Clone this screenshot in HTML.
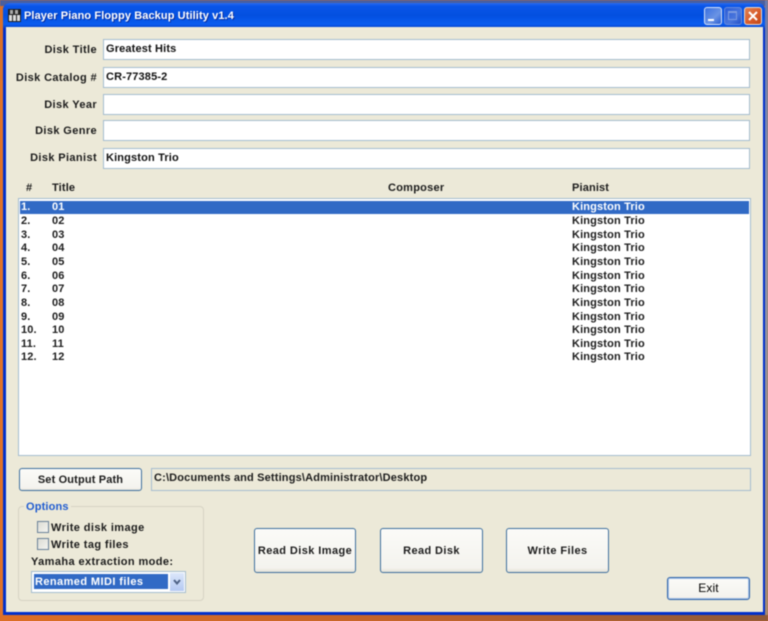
<!DOCTYPE html>
<html><head><meta charset="utf-8">
<style>
html,body{margin:0;padding:0;width:768px;height:621px;overflow:hidden;background:#d9702a}
body{position:relative;font-family:"Liberation Sans",sans-serif;font-size:11px;font-weight:bold;color:#111}
.a{position:absolute;white-space:nowrap}
#root{position:absolute;left:0;top:0;width:768px;height:621px;overflow:hidden;filter:blur(.4px)}
.lbl{position:absolute;right:671px;letter-spacing:.38px;line-height:14px;color:#1c1c1c}
.in{position:absolute;left:103px;height:19px;background:#fff;border:1px solid #a5bccf;line-height:18px;padding-left:2px;box-sizing:content-box;width:643px;letter-spacing:.15px}
.btn{position:absolute;box-sizing:border-box;border:1px solid #3e6f9e;border-radius:3px;background:linear-gradient(#fbfbf8,#f4f3ee 90%,#e6e3d8);text-align:center;letter-spacing:.15px;color:#1c1c1c}
.row{position:absolute;left:0;width:731px;height:14px;line-height:14px;letter-spacing:.15px;color:#1c1c1c}
.row span{position:absolute;top:0}
.n{left:2px}.t{left:33px}.p{left:553px}
.cb{position:absolute;width:10px;height:10px;border:1px solid #6a8198;background:linear-gradient(135deg,#dcdcd4,#f4f4f0)}
.o{letter-spacing:.4px;line-height:14px;color:#1c1c1c}
</style></head><body>
<div id="root">
<!-- desktop strip -->
<div class="a" style="left:0;top:0;width:768px;height:6px;background:#4a5f9e"></div>
<div class="a" style="left:0;top:80px;width:4px;height:540px;background:#e0732a"></div>
<div class="a" style="left:765px;top:0;width:3px;height:621px;background:linear-gradient(#6a7bb0,#8b93ad 40%,#a68a70)"></div>
<div class="a" style="left:0;top:615px;width:768px;height:6px;background:linear-gradient(90deg,#de6f25,#c4642a 50%,#8f5a3a)"></div>
<!-- window frame -->
<div class="a" style="left:3px;top:3px;width:762px;height:612px;background:#0030cc;border-radius:7px 7px 0 0"></div>
<div class="a" style="left:3px;top:3px;width:762px;height:25px;border-radius:7px 7px 0 0;background:linear-gradient(#2a6cf0,#0a55e8 12%,#0350e0 50%,#0a5cf0 85%,#0340c8)"></div>
<div class="a" style="left:6px;top:27px;width:757px;height:585px;background:#ece9d8"></div>
<!-- title bar -->
<div class="a" style="left:8px;top:9px;width:13px;height:13px;background:#222">
<div class="a" style="left:2px;top:1px;width:3px;height:4px;background:#aaa"></div>
<div class="a" style="left:7px;top:1px;width:3px;height:4px;background:#aaa"></div>
<div class="a" style="left:1px;top:6px;width:3px;height:6px;background:#ddd"></div>
<div class="a" style="left:5px;top:6px;width:3px;height:6px;background:#ddd"></div>
<div class="a" style="left:9px;top:6px;width:3px;height:6px;background:#ddd"></div>
</div>
<div class="a" style="left:24px;top:9px;line-height:14px;color:#fff;letter-spacing:.1px;font-size:11px;text-shadow:1px 1px 0 #0a2fa0">Player Piano Floppy Backup Utility v1.4</div>
<div class="a" style="left:704px;top:7px;width:16px;height:16px;border:1px solid #d8e4f8;border-radius:3px;background:linear-gradient(135deg,#3a70e0,#6b94e4 60%,#2a5cd0)"><div class="a" style="left:3px;top:11px;width:6px;height:2px;background:#fff"></div></div>
<div class="a" style="left:724px;top:7px;width:16px;height:16px;border:1px solid #6a8cdc;border-radius:3px;background:linear-gradient(135deg,#2a5cd8,#4a76dc 60%,#2350c8)"><div class="a" style="left:3px;top:3px;width:9px;height:9px;border:1px solid #7d9be0;border-top-width:2px;box-sizing:border-box"></div></div>
<div class="a" style="left:744px;top:7px;width:16px;height:16px;border:1px solid #e8dcd4;border-radius:3px;background:linear-gradient(135deg,#e08050,#d85a28 60%,#c04818);overflow:hidden">
<svg width="16" height="16" style="position:absolute;left:0;top:0"><path d="M4 4L12 12M12 4L4 12" stroke="#fff" stroke-width="2"/></svg></div>
<!-- fields -->
<div class="lbl" style="top:43px">Disk Title</div>
<div class="in" style="top:39px">Greatest Hits</div>
<div class="lbl" style="top:71px">Disk Catalog #</div>
<div class="in" style="top:67px">CR-77385-2</div>
<div class="lbl" style="top:98px">Disk Year</div>
<div class="in" style="top:94px"></div>
<div class="lbl" style="top:124px">Disk Genre</div>
<div class="in" style="top:120px"></div>
<div class="lbl" style="top:151px">Disk Pianist</div>
<div class="in" style="top:148px">Kingston Trio</div>
<!-- headers -->
<div class="a" style="left:26px;top:181px;line-height:14px;color:#1c1c1c;letter-spacing:.15px">#</div>
<div class="a" style="left:52px;top:181px;line-height:14px;color:#1c1c1c;letter-spacing:.15px">Title</div>
<div class="a" style="left:388px;top:181px;line-height:14px;color:#1c1c1c;letter-spacing:.25px">Composer</div>
<div class="a" style="left:572px;top:181px;line-height:14px;color:#1c1c1c;letter-spacing:.15px">Pianist</div>
<!-- list -->
<div class="a" style="left:18px;top:198px;width:731px;height:256px;background:#fff;border:1px solid #a5bccf;overflow:hidden">
<div class="a" style="left:1px;top:2px;width:729px;height:13px;background:#316ac5"></div>
<div class="row" style="top:1px;color:#fff"><span class="n">1.</span><span class="t">01</span><span class="p">Kingston Trio</span></div>
<div class="row" style="top:15px"><span class="n">2.</span><span class="t">02</span><span class="p">Kingston Trio</span></div>
<div class="row" style="top:29px"><span class="n">3.</span><span class="t">03</span><span class="p">Kingston Trio</span></div>
<div class="row" style="top:42px"><span class="n">4.</span><span class="t">04</span><span class="p">Kingston Trio</span></div>
<div class="row" style="top:56px"><span class="n">5.</span><span class="t">05</span><span class="p">Kingston Trio</span></div>
<div class="row" style="top:70px"><span class="n">6.</span><span class="t">06</span><span class="p">Kingston Trio</span></div>
<div class="row" style="top:83px"><span class="n">7.</span><span class="t">07</span><span class="p">Kingston Trio</span></div>
<div class="row" style="top:97px"><span class="n">8.</span><span class="t">08</span><span class="p">Kingston Trio</span></div>
<div class="row" style="top:111px"><span class="n">9.</span><span class="t">09</span><span class="p">Kingston Trio</span></div>
<div class="row" style="top:124px"><span class="n">10.</span><span class="t">10</span><span class="p">Kingston Trio</span></div>
<div class="row" style="top:138px"><span class="n">11.</span><span class="t">11</span><span class="p">Kingston Trio</span></div>
<div class="row" style="top:151px"><span class="n">12.</span><span class="t">12</span><span class="p">Kingston Trio</span></div>
</div>
<!-- output path -->
<div class="btn" style="left:19px;top:468px;width:123px;height:23px;line-height:22px;">Set Output Path</div>
<div class="a" style="left:151px;top:468px;height:21px;border:1px solid #a5bccf;line-height:18px;padding-left:2px;box-sizing:content-box;width:596px;letter-spacing:.17px;color:#1c1c1c">C:\Documents and Settings\Administrator\Desktop</div>
<!-- options -->
<div class="a" style="left:18px;top:506px;width:184px;height:93px;border:1px solid #d6d3c4;border-radius:4px"></div>
<div class="a" style="left:24px;top:500px;padding:0 2px;background:#ece9d8;color:#1f5bd0;line-height:14px;letter-spacing:.15px">Options</div>
<div class="cb" style="left:37px;top:521px"></div>
<div class="a o" style="left:51px;top:521px">Write disk image</div>
<div class="cb" style="left:37px;top:538px"></div>
<div class="a o" style="left:51px;top:538px">Write tag files</div>
<div class="a o" style="left:31px;top:555px">Yamaha extraction mode:</div>
<div class="a" style="left:31px;top:571px;width:153px;height:20px;background:#fff;border:1px solid #a5bccf"></div>
<div class="a" style="left:34px;top:574px;width:134px;height:15px;background:#316ac5;color:#fff;line-height:16px;letter-spacing:.42px;padding-left:1px;box-sizing:border-box">Renamed MIDI files</div>
<div class="a" style="left:170px;top:573px;width:14px;height:18px;background:linear-gradient(#dbe6fa,#b4c9f2)">
<svg width="14" height="18"><path d="M4 7L7 10.5L10 7" fill="none" stroke="#4d6185" stroke-width="2"/></svg></div>
<!-- buttons -->
<div class="btn" style="left:254px;top:528px;width:102px;height:45px;line-height:45px;letter-spacing:.42px">Read Disk Image</div>
<div class="btn" style="left:380px;top:528px;width:103px;height:45px;line-height:45px;letter-spacing:.4px">Read Disk</div>
<div class="btn" style="left:506px;top:528px;width:103px;height:45px;line-height:45px;letter-spacing:.42px">Write Files</div>
<div class="btn" style="left:667px;top:577px;width:83px;height:23px;line-height:21px;border:1px solid #2d62a8;box-shadow:inset 0 0 0 1px #a9c4e8;font-weight:normal;letter-spacing:.1px;color:#000;font-size:12px">Exit</div>
</div>
</body></html>
